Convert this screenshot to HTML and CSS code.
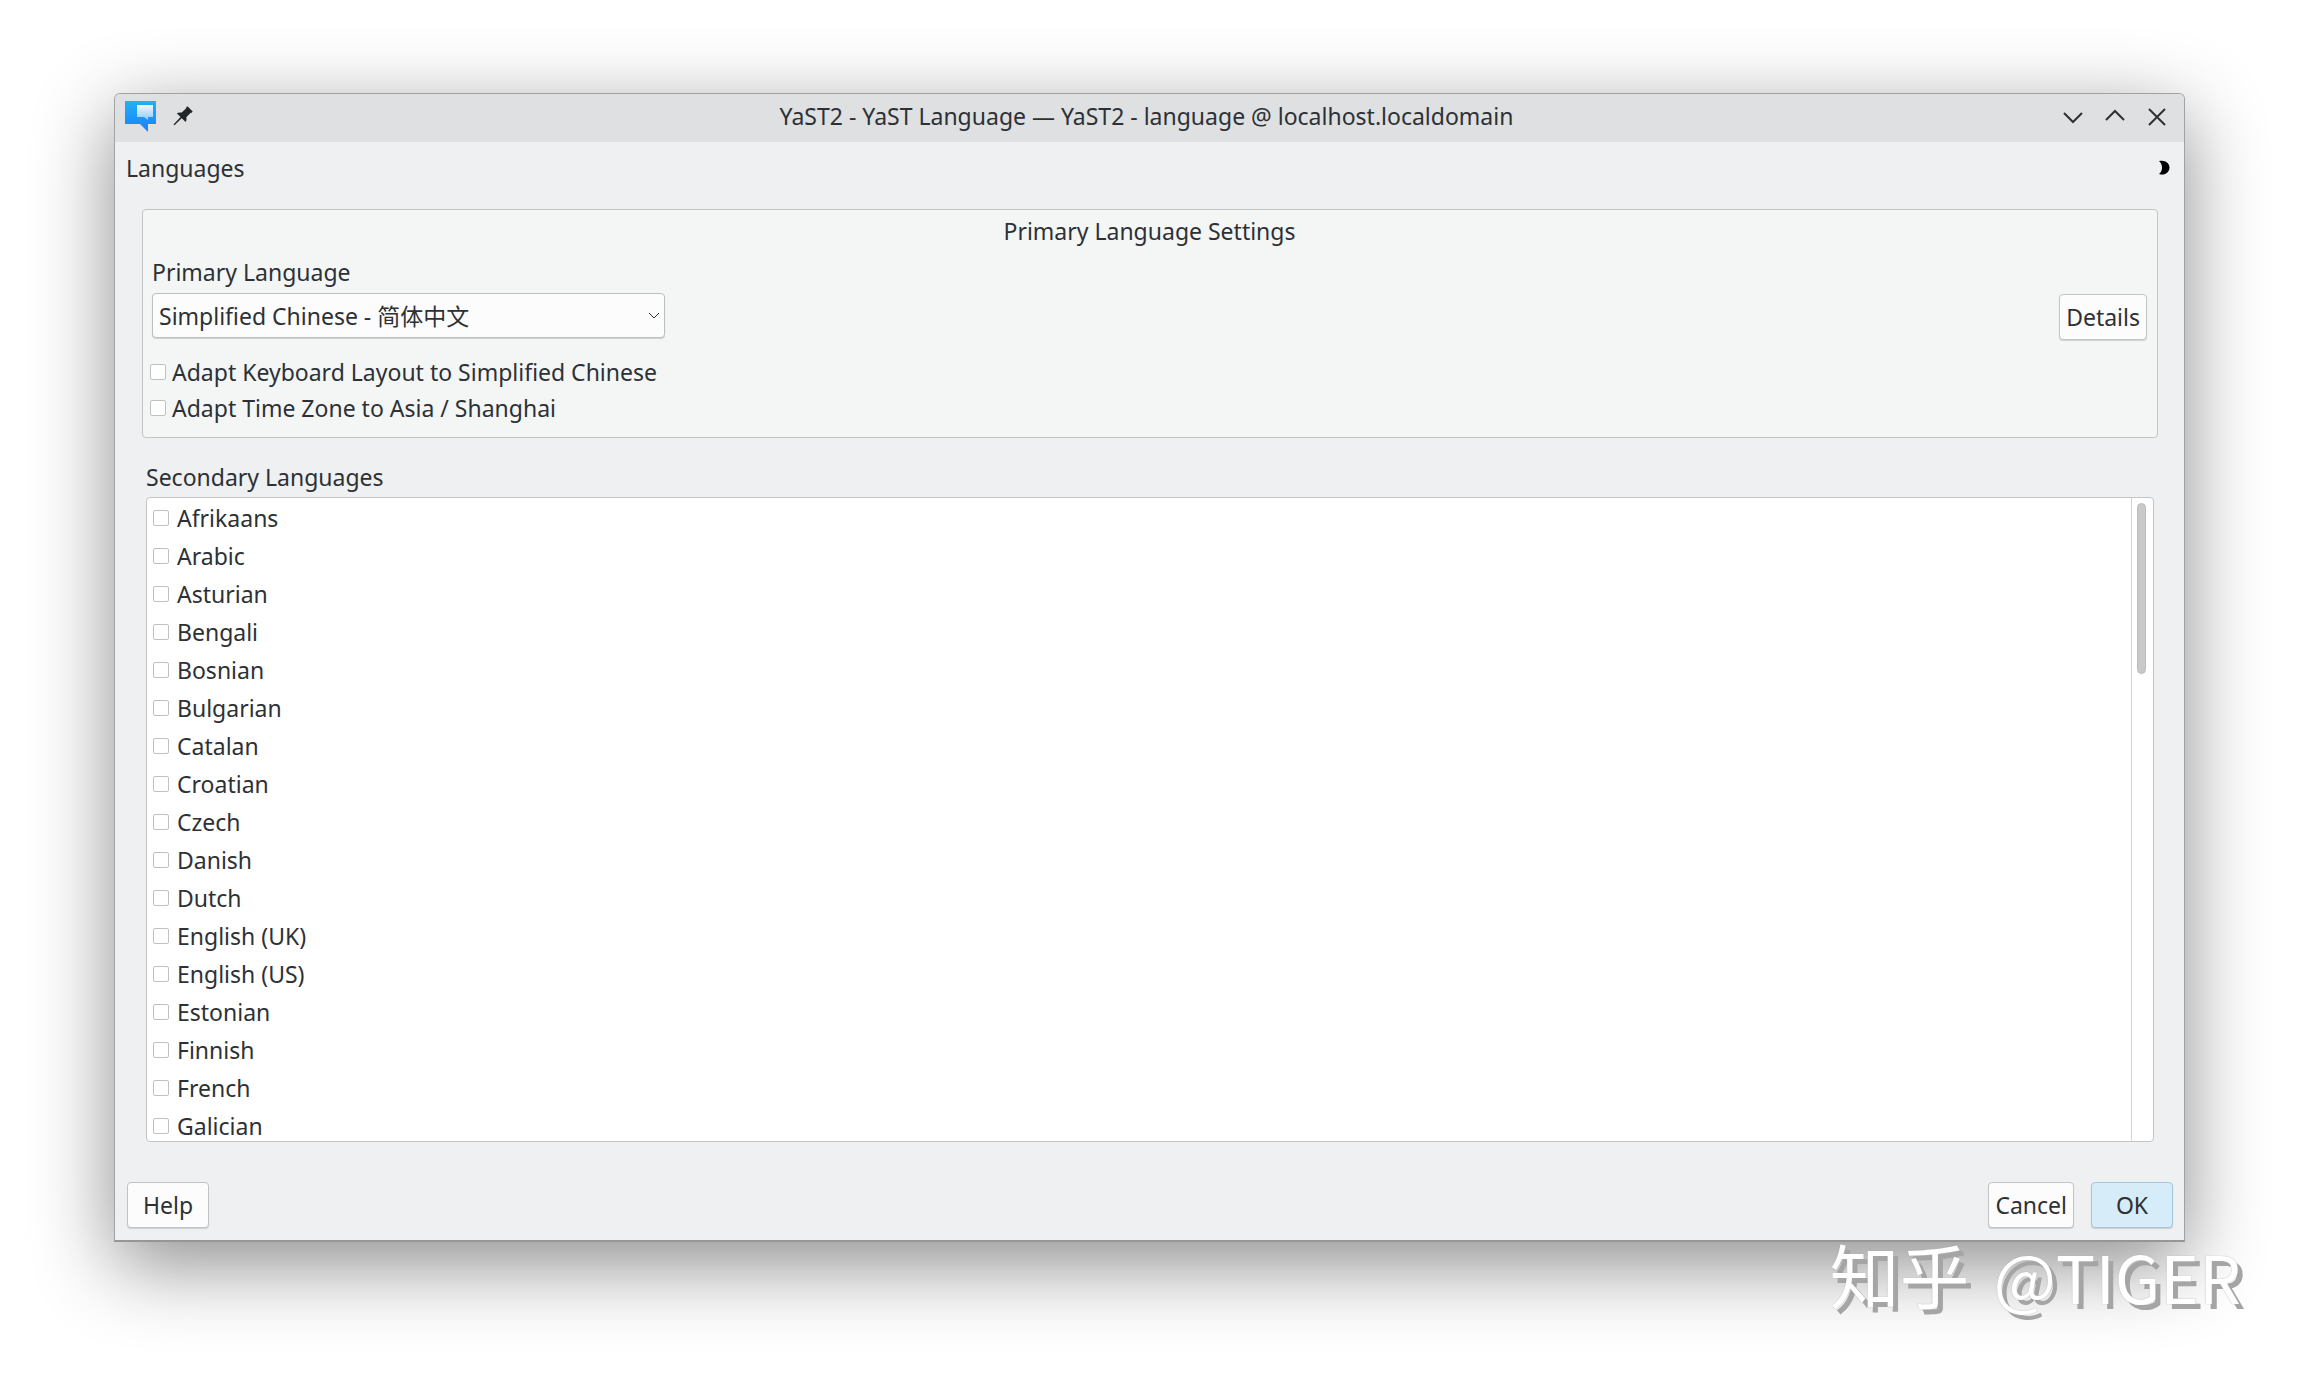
FILE: index.html
```html
<!DOCTYPE html>
<html lang="en">
<head>
    <meta charset="UTF-8">
    <meta name="viewport" content="width=device-width, initial-scale=1.0">
    <title>YaST2 - YaST Language</title>
    <link rel="stylesheet" href="styles.css">
</head>
<body>
    <div class="window">
        <header class="titlebar">
            <div class="titlebar-left">
                <svg class="app-icon" viewBox="0 0 32 32">
                    <defs>
                        <linearGradient id="bubble" x1="0" y1="0" x2="0" y2="1">
                            <stop offset="0" stop-color="#1fb2f6"/>
                            <stop offset="1" stop-color="#1a7ffb"/>
                        </linearGradient>
                        <linearGradient id="bubbleSmall" x1="0" y1="0" x2="0" y2="1">
                            <stop offset="0" stop-color="#f0f7fe"/>
                            <stop offset="1" stop-color="#8fcbfb"/>
                        </linearGradient>
                    </defs>
                    <path d="M0 1h31v23h-8v8l-8-8H0z" fill="url(#bubble)"/>
                    <path d="M12 5h16v12h-5v3l-4-3h-7z" fill="url(#bubbleSmall)"/>
                </svg>
                <button class="icon-button" aria-label="Pin">
                    <svg width="20" height="20" viewBox="0 0 20 20">
                        <path d="M14.5.3 19.7 5.500 18.300 7 17.700 6.800 13.300 11.200C13.800 13 13.500 14.700 12.700 16L8.700 12.200 1.500 19.300.5 18.400 7.500 11 3.800 7.200C5.300 6.300 7 6.200 8.700 6.600L13.200 2.200 13 1.700z" fill="#232629"/>
                    </svg>
                </button>
            </div>
            <h1 class="title">YaST2 - YaST Language — YaST2 - language @ localhost.localdomain</h1>
            <div class="titlebar-right">
                <button class="icon-button" aria-label="Minimize">
                    <svg width="22" height="22" viewBox="0 0 22 22"><path d="M2 8l9 9 9-9"/></svg>
                </button>
                <button class="icon-button" aria-label="Maximize">
                    <svg width="22" height="22" viewBox="0 0 22 22"><path d="M2 15l9-9 9 9"/></svg>
                </button>
                <button class="icon-button" aria-label="Close">
                    <svg width="22" height="22" viewBox="0 0 22 22"><path d="M3 4l16 16M19 4L3 20"/></svg>
                </button>
            </div>
        </header>

        <main class="content">
            <div class="heading">
                <h2>Languages</h2>
                <button class="icon-button" aria-label="Theme">
                    <svg class="moon" width="12" height="16" viewBox="0 0 12 16">
                        <path d="M1 1C7-.5 11.500 3 11.500 7.500S7 16 1 14C5 11 5 4.500 1 1z"/>
                    </svg>
                </button>
            </div>

            <section class="group">
                <h3>Primary Language Settings</h3>
                <label for="primary">Primary Language</label>
                <div class="primary-row">
                    <div class="select-wrap">
                        <select id="primary">
                            <option>Simplified Chinese - 简体中文</option>
                        </select>
                        <svg class="arrow" width="12" height="8" viewBox="0 0 12 8"><path d="M1 1l5 5 5-5"/></svg>
                    </div>
                    <button class="button">Details</button>
                </div>
                <div class="options">
                    <label class="option"><input type="checkbox">Adapt Keyboard Layout to Simplified Chinese</label>
                    <label class="option"><input type="checkbox">Adapt Time Zone to Asia / Shanghai</label>
                </div>
            </section>

            <section class="secondary">
                <h3>Secondary Languages</h3>
                <div class="list">
                    <div class="items">
                        <label class="item"><input type="checkbox">Afrikaans</label>
                        <label class="item"><input type="checkbox">Arabic</label>
                        <label class="item"><input type="checkbox">Asturian</label>
                        <label class="item"><input type="checkbox">Bengali</label>
                        <label class="item"><input type="checkbox">Bosnian</label>
                        <label class="item"><input type="checkbox">Bulgarian</label>
                        <label class="item"><input type="checkbox">Catalan</label>
                        <label class="item"><input type="checkbox">Croatian</label>
                        <label class="item"><input type="checkbox">Czech</label>
                        <label class="item"><input type="checkbox">Danish</label>
                        <label class="item"><input type="checkbox">Dutch</label>
                        <label class="item"><input type="checkbox">English (UK)</label>
                        <label class="item"><input type="checkbox">English (US)</label>
                        <label class="item"><input type="checkbox">Estonian</label>
                        <label class="item"><input type="checkbox">Finnish</label>
                        <label class="item"><input type="checkbox">French</label>
                        <label class="item"><input type="checkbox">Galician</label>
                    </div>
                    <div class="scrollbar"><div class="thumb"></div></div>
                </div>
            </section>
        </main>

        <footer class="footer">
            <button class="button wide">Help</button>
            <div class="footer-right">
                <button class="button">Cancel</button>
                <button class="button wide primary">OK</button>
            </div>
        </footer>
    </div>
    <div class="watermark"><span class="brand">知乎</span><span>@TIGER</span></div>
</body>
</html>
```
FILE: styles.css
```css
* {
    box-sizing: border-box;
}

body {
    margin: 0;
    height: 100vh;
    min-height: 800px;
    padding: 93px 116px 136px 114px;
    position: relative;
    overflow: hidden;
    background-color: #fff;
    color: #2d3135;
    font-family: "Noto Sans", "Noto Sans CJK SC", sans-serif;
    font-size: 23px;
    line-height: 32px;
}

h1, h2, h3 {
    margin: 0;
    font-size: 23px;
    font-weight: normal;
}

button, select {
    color: inherit;
    font: inherit;
}

.window {
    display: flex;
    flex-direction: column;
    height: 100%;
    background-color: #eff0f1;
    border: 1px solid #a0a2a4;
    border-bottom: 2px solid #949698;
    border-radius: 6px 6px 0 0;
    box-shadow: 0 22px 80px rgba(0, 0, 0, 0.46);
}

/* title bar */
.titlebar {
    display: grid;
    grid-template-columns: 1fr auto 1fr;
    align-items: center;
    height: 48px;
    padding: 0 16px 4px 10px;
    background-color: #dee0e2;
    border-radius: 5px 5px 0 0;
}

.titlebar-left,
.titlebar-right {
    display: flex;
    align-items: center;
    gap: 16px;
}

.titlebar-right {
    justify-content: flex-end;
    gap: 20px;
}

.app-icon {
    width: 32px;
    height: 32px;
}

.icon-button {
    display: flex;
    padding: 0;
    background: none;
    border: none;
}

.titlebar-right path,
.arrow path {
    fill: none;
    stroke: #2d3135;
    stroke-width: 2;
}

/* content */
.content {
    display: flex;
    flex: 1;
    flex-direction: column;
    min-height: 0;
    padding: 10px 26px 0 27px;
}

.heading {
    display: flex;
    justify-content: space-between;
    align-items: center;
    margin: 0 -12px 25px -16px;
}

.group {
    padding: 5px 10px 11px 9px;
    background-color: #f4f6f6;
    border: 1px solid #c2c4c5;
    border-radius: 4px;
}

.group h3 {
    margin-bottom: 9px;
    text-align: center;
}

.group > label {
    display: block;
    margin-bottom: 5px;
}

.primary-row {
    display: flex;
    justify-content: space-between;
    align-items: flex-end;
    height: 47px;
}

.select-wrap {
    position: relative;
    align-self: flex-start;
}

select {
    display: block;
    appearance: none;
    width: 513px;
    height: 45px;
    padding: 0 28px 0 6px;
    background-color: #fcfcfc;
    border: 1px solid #bcbebf;
    border-radius: 4px;
    box-shadow: 0 1px 1px rgba(0, 0, 0, 0.15);
}

.arrow {
    position: absolute;
    top: 19px;
    right: 5px;
    pointer-events: none;
}

.arrow path {
    stroke-width: 1;
}

.button {
    height: 46px;
    padding: 0 6px;
    background-color: #fcfcfc;
    border: 1px solid #c2c4c5;
    border-radius: 4px;
    box-shadow: 0 1px 1px rgba(0, 0, 0, 0.15);
}

.wide {
    width: 82px;
}

.primary {
    background-color: #d6ecf8;
    border-color: #a3c6d9;
}

.options {
    margin: 14px 0 0 -2px;
}

.option,
.item {
    display: flex;
    align-items: center;
    gap: 6px;
    height: 36px;
}

input[type="checkbox"] {
    appearance: none;
    width: 16px;
    height: 16px;
    margin: 0;
    background-color: #fff;
    border: 1px solid #bfc1c2;
    border-radius: 2px;
}

input[type="checkbox"]:checked {
    background-color: #3daee9;
}

.secondary {
    display: flex;
    flex: 1;
    flex-direction: column;
    min-height: 0;
    padding: 23px 4px 0 4px;
}

.secondary h3 {
    margin-bottom: 4px;
}

.list {
    display: flex;
    flex: 1;
    min-height: 0;
    background-color: #fff;
    border: 1px solid #c2c4c5;
    border-radius: 4px;
    overflow: hidden;
}

.items {
    flex: 1;
    padding: 1px 6px;
    overflow: hidden;
}

.item {
    gap: 8px;
    height: 38px;
}

.scrollbar {
    width: 22px;
    padding: 5px;
    border-left: 1px solid #d3d5d6;
}

.thumb {
    width: 9px;
    height: 27%;
    background-color: #c9c9c9;
    border: 1px solid #bcbcbc;
    border-radius: 5px;
}

.footer,
.footer-right {
    display: flex;
    justify-content: space-between;
}

.footer {
    padding: 40px 11px 12px 12px;
}

.footer-right {
    gap: 17px;
}

.watermark {
    position: absolute;
    right: 60px;
    bottom: 55px;
    display: flex;
    align-items: baseline;
    gap: 24px;
    color: #fff;
    font-family: "Noto Sans CJK SC", sans-serif;
    font-size: 66px;
    line-height: 96px;
    text-shadow: 5px 5px 0 #a5a5a5, 0 0 1px #999;
}

.brand {
    font-size: 70px;
}
```
